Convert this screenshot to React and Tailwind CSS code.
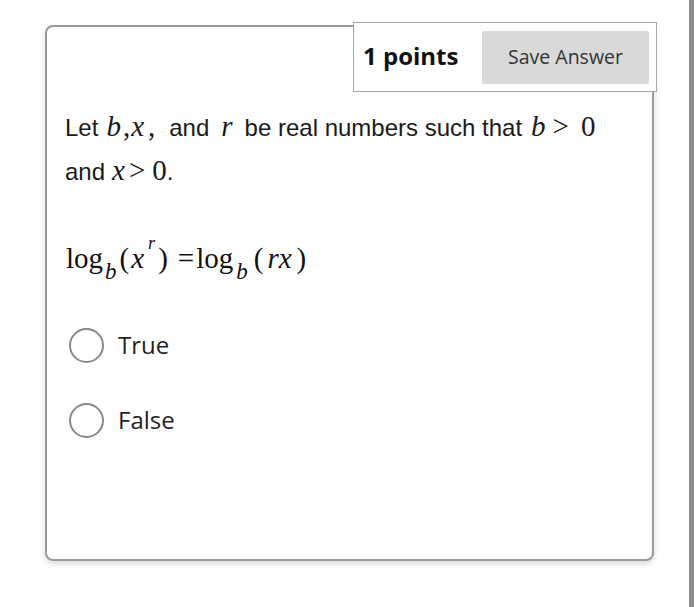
import React from 'react';

const M = ({ children, up = false, className = '' }) => (
    <span className={`font-['Liberation_Serif',serif] text-[29px] ${up ? '' : 'italic'} ${className}`}>{children}</span>
);

const Radio = ({ label }) => (
    <label className="flex items-center h-[40px]">
        <span className="w-[35px] h-[35px] ml-[1px] rounded-full border-2 border-[#888888] bg-white" />
        <span className="ml-[14px] text-[24px] text-[#1f1f1f] font-['Open_Sans',sans-serif]">{label}</span>
    </label>
);

export default function App() {
    return (
        <div className="flex w-[700px] h-[607px] bg-white overflow-hidden">
            <div className="w-[689px] pt-[25px] pl-[45px]">
                {/* Question card */}
                <div className="w-[609px] h-[536px] border-2 border-[#9a9a9a] rounded-[8px] bg-white shadow-[0_3px_6px_rgba(0,0,0,0.15)]">
                    {/* Header: points + save */}
                    <div className="flex justify-end -mt-[5px] -mr-[5px]">
                        <div className="flex items-center w-[304px] h-[70px] border-[1.5px] border-[#a8a8a8] bg-white pl-[9px] pr-[7px]">
                            <span className="text-[24px] font-bold text-[#111] font-['Open_Sans',sans-serif] -mt-[3px]">1 points</span>
                            <button className="ml-auto w-[167px] h-[53px] rounded-[2px] bg-[#d9d9d9] text-[19.5px] text-[#333] font-['Open_Sans',sans-serif]">
                                Save Answer
                            </button>
                        </div>
                    </div>

                    <div className="pl-[18px]">
                        {/* Question text */}
                        <p className="mt-[13px] text-[24px] leading-[42px] text-[#1a1a1a] font-['Liberation_Sans',Arial,sans-serif]">
                            Let<M className="ml-[8px]">b</M><M up className="ml-[2px]">,</M><M className="ml-[1px]">x</M><M up className="ml-[4px]">,</M>
                            <span className="ml-[14px]">and</span><M className="ml-[12px]">r</M>
                            <span className="ml-[12px]">be real numbers such that</span><M className="ml-[9px]">b</M><M up className="ml-[7px]">&gt;</M><M up className="ml-[12px]">0</M>
                            <br />
                            and<M className="ml-[7px]">x</M><M up className="ml-[4px]">&gt;</M><M up className="ml-[7px]">0</M>.
                        </p>

                        {/* Formula */}
                        <div className="mt-[46px] h-[40px] flex items-center text-[29px] text-[#111] font-['Liberation_Serif',serif]">
                            <span className="ml-[1px]">log</span>
                            <span className="italic text-[23px] relative top-[13px] ml-[2px]">b</span>
                            <span className="ml-[3px]">(</span>
                            <span className="italic ml-[2px]">x</span>
                            <span className="italic text-[18px] relative -top-[16px] ml-[4px]">r</span>
                            <span className="ml-[3px]">)</span>
                            <span className="ml-[10px]">=</span>
                            <span className="ml-[2px]">log</span>
                            <span className="italic text-[23px] relative top-[13px] ml-[3px]">b</span>
                            <span className="ml-[6px]">(</span>
                            <span className="italic ml-[4px]">rx</span>
                            <span className="ml-[5px]">)</span>
                        </div>

                        {/* Options */}
                        <div className="mt-[46px] flex flex-col gap-[35px] pl-[3px]">
                            <Radio label="True" />
                            <Radio label="False" />
                        </div>
                    </div>
                </div>
            </div>
            {/* Scrollbar edge */}
            <div className="w-[5px] h-full bg-[#8c8c8c]" />
        </div>
    );
}
